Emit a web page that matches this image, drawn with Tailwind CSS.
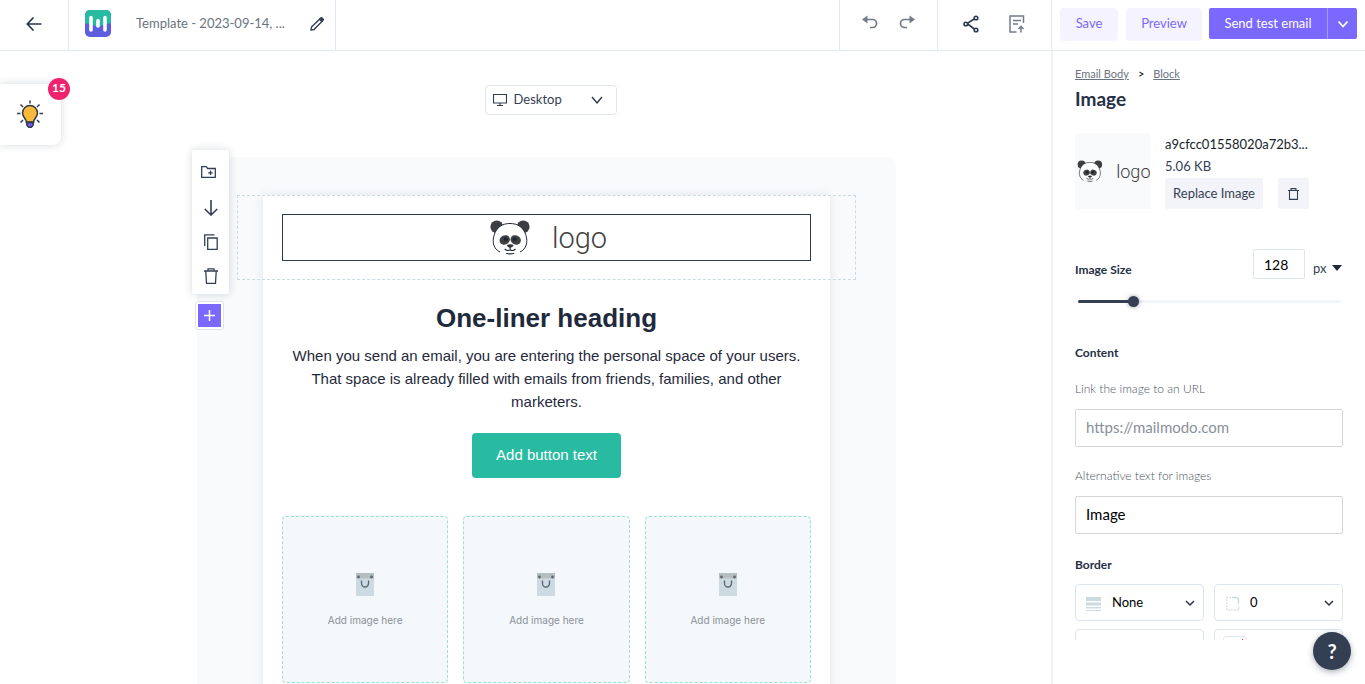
<!DOCTYPE html>
<html lang="en">
<head>
  <meta charset="UTF-8" />
  <meta name="viewport" content="width=device-width, initial-scale=1.0"/>
  <title>Template Editor</title>
  <script src="https://cdn.jsdelivr.net/npm/@tailwindcss/browser@4"></script>
</head>
<body class="h-screen overflow-hidden flex flex-col bg-white text-[#343f53] text-[13px] font-[Lato,sans-serif]">

  <!-- shared panda logo -->
  <svg class="hidden">
    <symbol id="panda-logo" viewBox="0 0 128 46">
      <circle cx="13.800" cy="11.800" r="6.400" fill="#3c3e42"/>
      <circle cx="40.200" cy="11.800" r="6.400" fill="#3c3e42"/>
      <path d="M17 37C10.500 34 9 27 11 20.500C13.500 12 19.500 8.500 27 8.500S40.500 12 43 20.500C45 27 43.500 34 37 37" fill="#fff" stroke="#222b36" stroke-width="1"/>
      <ellipse cx="21.700" cy="24.900" rx="5.300" ry="4.600" fill="#414141" transform="rotate(-25 21.700 24.900)"/>
      <ellipse cx="32.700" cy="24.900" rx="5.300" ry="4.600" fill="#414141" transform="rotate(25 32.700 24.900)"/>
      <circle cx="22.700" cy="24.200" r="2" fill="#1b2637"/>
      <circle cx="31.700" cy="24.200" r="2" fill="#1b2637"/>
      <path d="M23.700 30q3.500-1.500 7 0q-1 2.700-3.500 2.700t-3.500-2.700" fill="#333"/>
      <path d="M27.200 32v2.300M21.700 34q2.700 2.500 5.400.7q2.700 1.800 5.400-.7M23.200 38.300q4 1.200 8 0" fill="none" stroke="#222b36" stroke-width="1.100"/>
      <text x="69" y="33" font-size="29" font-weight="300" font-family="Roboto, sans-serif" fill="#414141">logo</text>
    </symbol>
    <symbol id="bag" viewBox="0 0 18 23">
      <path d="M0 0h18v23H0z" fill="#cbdbe1"/>
      <path d="M0 0h18v5.500H0z" fill="#b5bfc0"/>
      <circle cx="2.500" cy="4" r="1.400" fill="#5f6670"/>
      <circle cx="15.500" cy="4" r="1.400" fill="#5f6670"/>
      <path d="M5.500 7.500v3a3.500 3.500 0 0 0 7 0v-3" fill="none" stroke="#5b626d" stroke-width="1.300"/>
    </symbol>
    <symbol id="chevron" viewBox="0 0 12 12">
      <path d="M2 4l4 4 4-4" fill="none" stroke="currentColor" stroke-width="1.500"/>
    </symbol>
  </svg>

  <header class="flex h-[51px] shrink-0 border-b border-[#e2e8f0]">
    <button aria-label="Back" class="w-[69px] border-r border-[#e2e8f0] flex items-center justify-center pb-[3px]">
      <svg class="w-4 h-4" viewBox="0 0 16 16" fill="none" stroke="#2b3547" stroke-width="1.700"><path d="M15.500 8H1.500M7.500 1.500L1.300 8l6.200 6.500"/></svg>
    </button>
    <div class="w-[267px] border-r border-[#e2e8f0] flex items-center pl-4 pr-[11px] pb-[3px]">
      <svg class="w-[26px] h-[27px]" viewBox="0 0 26 27">
        <rect width="26" height="27" rx="5" fill="#5f5ce0"/>
        <path d="M0 13.500V5a5 5 0 0 1 5-5h16a5 5 0 0 1 5 5v8.500h-4l-2 2-3-.5-4 3-4-3-3 .5-2-2z" fill="#28bba1"/>
        <path d="M6 7.500v12.500M13 10.500v5.500M20 7.500v12.500" stroke="#fff" stroke-width="3.600" stroke-linecap="round"/>
      </svg>
      <span class="ml-[25px] text-[#6a7381]">Template - 2023-09-14, ...</span>
      <button aria-label="Rename" class="ml-auto">
        <svg class="w-[14px] h-[14px]" viewBox="0 0 14 14" fill="none" stroke="#343f53" stroke-width="1.400"><path d="M1 13l.5-3L9.500 2.200l2.400 2.400L4 12.500z"/><path d="M10 1.500L11.500.5l2 2-1 1.500z" fill="#343f53"/></svg>
      </button>
    </div>
    <div class="ml-auto w-[99px] border-x border-[#e2e8f0] flex items-center justify-center gap-[21px] pb-[7px]">
      <button aria-label="Undo"><svg class="w-4 h-[14px]" viewBox="0 0 16 14"><path d="M4 4.500h6.500a4 4 0 0 1 0 8H8" fill="none" stroke="#737c88" stroke-width="1.700"/><path d="M0 4.500L5.500.5v8z" fill="#737c88"/></svg></button>
      <button aria-label="Redo"><svg class="w-4 h-[14px]" viewBox="0 0 16 14"><path d="M12 4.500H5.500a4 4 0 0 0 0 8H8" fill="none" stroke="#737c88" stroke-width="1.700"/><path d="M16 4.500L10.500.5v8z" fill="#737c88"/></svg></button>
    </div>
    <div class="w-[114px] border-r border-[#e2e8f0] flex items-center justify-center gap-[30px] pr-[2px] pb-[3px]">
      <button aria-label="Share"><svg class="w-4 h-[18px]" viewBox="0 0 16 18" fill="none" stroke="#2f3a4c" stroke-width="1.600"><path d="M12 3.500L4 8.500l8 6"/><circle cx="2.800" cy="9" r="1.800" fill="#fff"/><circle cx="13" cy="3" r="1.800" fill="#fff"/><circle cx="13" cy="15" r="1.800" fill="#fff"/></svg></button>
      <button aria-label="Export"><svg class="w-4 h-[18px]" viewBox="0 0 16 18" fill="none" stroke="#737c88" stroke-width="1.500"><path d="M7.500 17H1V1h13.500v7M4 5.500h8M4 9h5M12 17.500V12M9.500 14l2.500-2.700L14.500 14"/></svg></button>
    </div>
    <div class="w-[313px] flex items-start pt-2 pl-2 pr-2">
      <button class="w-[58px] h-[33px] mr-2 rounded-sm bg-[#f5f3ff] text-[#7b69f5] pb-[2px]">Save</button>
      <button class="w-[76px] h-[33px] rounded-sm bg-[#f5f3ff] text-[#7b69f5] pb-[2px]">Preview</button>
      <div class="ml-auto flex h-[31px] rounded-xs bg-[#7b68ff] text-white">
        <button class="w-[118px]">Send test email</button>
        <button aria-label="More send options" class="w-[30px] border-l border-[#a79bff] flex items-center justify-center">
          <svg class="w-3 h-3" viewBox="0 0 12 12"><path d="M1.500 3.500L6 8.500l4.500-5" fill="none" stroke="#fff" stroke-width="1.800"/></svg>
        </button>
      </div>
    </div>
  </header>

  <div class="flex flex-1 min-h-0">
    <main class="relative flex-1 min-w-0 overflow-hidden pl-[42px] pt-[34px]">

      <div class="absolute left-0 top-[33px] w-[61px] h-[61px] bg-white rounded-r-lg shadow-[0_0_8px_rgba(45,60,80,0.2)] flex items-center justify-center">
        <button aria-label="Tips" class="pr-[2px] pb-[2px]">
          <svg class="w-7 h-7" viewBox="0 0 28 28">
            <path d="M14 .5V3.500M1 13.500h3.500M23.500 13.500H27M4.500 4.500l2.500 2.500M23.500 4.500L21 7M4.500 22.500L7 20M23.500 22.500L21 20" stroke="#343f53" stroke-width="1.500"/>
            <path d="M10.500 22c0-3-4-4.500-4-9a7.500 7.500 0 0 1 15 0c0 4.500-4 6-4 9z" fill="#fbb93c" stroke="#2f3a4c" stroke-width="1.500"/>
            <path d="M10.500 22.500h7l-.5 3-2 2h-2l-2-2z" fill="#6c5ce7" stroke="#2f3a4c" stroke-width="1.500"/>
          </svg>
        </button>
        <span class="absolute -top-[6px] -right-[9px] w-[22px] h-[22px] rounded-full bg-[#f0246e] text-white text-xs font-bold flex items-center justify-center pb-[2px]">15</span>
      </div>

      <div class="relative w-[132px] mx-auto left-1">
        <svg class="absolute left-2 top-[9px] w-[14px] h-3" viewBox="0 0 14 12" fill="none" stroke="#343f53" stroke-width="1.200"><path d="M.5 .5h13v8.500H.5zM7 9v2.500M4 11.500h6"/></svg>
        <select aria-label="Device" class="appearance-none w-full h-[30px] pl-7 border border-[#dfe5ee] rounded-sm bg-transparent">
          <option>Desktop</option>
          <option>Mobile</option>
        </select>
        <svg class="absolute right-[14px] top-[9px] w-3 h-3 pointer-events-none" viewBox="0 0 12 12" fill="none" stroke="#2b3547" stroke-width="1.400"><path d="M1 3l5 6 5-6"/></svg>
      </div>

      <div class="relative w-[699px] h-full mx-auto mt-[42px] pt-[38px] rounded-lg bg-[#f8fafc]">

        <!-- block toolbar -->
        <div class="absolute -left-[5px] -top-[7px] z-10">
          <div class="w-[37px] h-[144px] rounded-xs bg-white shadow-[0_0_8px_rgba(45,60,80,0.2)] flex flex-col items-center pt-4 pb-[11px]">
            <button aria-label="Save block" class="mr-1"><svg class="w-[15px] h-3" viewBox="0 0 15 12" fill="none" stroke="#343f53" stroke-width="1.300"><path d="M.7 11.300V.7h4.500l1.500 1.800h7.600v8.800zM9.500 4.500v4.600M7.200 6.800h4.600"/></svg></button>
            <button aria-label="Move down" class="mt-[22px]"><svg class="w-[14px] h-4" viewBox="0 0 14 16" fill="none" stroke="#343f53" stroke-width="1.600"><path d="M7 0v14.500M.8 9L7 15l6.200-6"/></svg></button>
            <button aria-label="Duplicate" class="mt-[18px]"><svg class="w-[14px] h-4" viewBox="0 0 14 16" fill="none" stroke="#343f53" stroke-width="1.300"><path d="M3.700 4h9.500v11.300H3.700zM.7 12V.8h9.800"/></svg></button>
            <button aria-label="Delete" class="mt-[18px]"><svg class="w-[14px] h-4" viewBox="0 0 14 16" fill="none" stroke="#343f53" stroke-width="1.300"><path d="M0 3h14M4 3V.8h6V3M1.800 3.500l.7 11.800h9l.7-11.800"/></svg></button>
          </div>
          <button aria-label="Add block" class="mt-2 ml-1 w-[27px] h-[27px] border-2 border-white outline outline-[#dfe3ea] rounded-xs bg-[#7b68ff] flex items-center justify-center">
            <svg class="w-[11px] h-[11px]" viewBox="0 0 11 11" stroke="#fff" stroke-width="1.500"><path d="M5.500 0v11M0 5.500h11"/></svg>
          </button>
        </div>

        <article class="w-[567px] h-full mx-auto bg-white shadow-[0_0_10px_rgba(45,60,80,0.1)] text-center text-[#1f2a3c] font-['Liberation_Sans',Arial,sans-serif]">
          <section class="-mx-[26px] h-[85px] px-11 py-[18px] border border-dashed border-[#cbdbe1]">
            <div class="h-[47px] border border-[#2d3a50] flex items-center justify-center">
              <svg class="w-[128px] h-[46px]" role="img" aria-label="logo"><use href="#panda-logo"/></svg>
            </div>
          </section>
          <div class="px-[19px] pt-[22px]">
            <h1 class="text-[26px] leading-8 font-bold">One-liner heading</h1>
            <p class="mt-[10px] text-[15px] leading-[23px]">When you send an email, you are entering the personal space of your users. That space is already filled with emails from friends, families, and other marketers.</p>
            <button class="mt-5 w-[149px] h-[45px] rounded-sm bg-[#28bba1] text-white text-[15px]">Add button text</button>
            <div class="mt-[38px] grid grid-cols-3 gap-[15px] font-[Inter,sans-serif] text-[10px] leading-4 text-[#8a9099]">
              <div class="h-[167px] rounded-sm border border-dashed border-[#9be0d1] bg-[#f4f8fa] flex flex-col items-center pt-14 gap-4">
                <svg class="w-[18px] h-[23px]"><use href="#bag"/></svg>
                <span>Add image here</span>
              </div>
              <div class="h-[167px] rounded-sm border border-dashed border-[#9be0d1] bg-[#f4f8fa] flex flex-col items-center pt-14 gap-4">
                <svg class="w-[18px] h-[23px]"><use href="#bag"/></svg>
                <span>Add image here</span>
              </div>
              <div class="h-[167px] rounded-sm border border-dashed border-[#9be0d1] bg-[#f4f8fa] flex flex-col items-center pt-14 gap-4">
                <svg class="w-[18px] h-[23px]"><use href="#bag"/></svg>
                <span>Add image here</span>
              </div>
            </div>
          </div>
        </article>
      </div>
    </main>

    <aside class="relative w-[314px] shrink-0 border-l-2 border-[#f1f2f8] flex flex-col pb-11 bg-white">
      <div class="flex-1 overflow-hidden pl-[22px] pr-[22px] pt-[15px]">
        <nav class="flex gap-[9px] text-[11px] leading-4 text-[#6a7381]">
          <a href="#" class="underline">Email Body</a>
          <span class="text-black">&gt;</span>
          <a href="#" class="underline">Block</a>
        </nav>
        <h2 class="mt-[5px] text-[19px] leading-6 font-bold text-[#253045]">Image</h2>

        <div class="mt-[22px] flex gap-[15px]">
          <div class="w-[75px] h-[76px] bg-[#f8fafc] flex items-center justify-center overflow-hidden">
            <svg class="w-[80px] h-[29px] shrink-0" role="img" aria-label="logo"><use href="#panda-logo"/></svg>
          </div>
          <div>
            <p class="leading-[22px] text-[#161d29]">a9cfcc01558020a72b3...</p>
            <p class="leading-[22px]">5.06 KB</p>
            <div class="mt-px flex gap-[15px]">
              <button class="w-[98px] h-[31px] rounded-xs bg-[#f3f4f9]">Replace Image</button>
              <button aria-label="Delete image" class="w-[31px] h-[31px] rounded-xs bg-[#f3f4f9] flex items-center justify-center">
                <svg class="w-[11px] h-3" viewBox="0 0 11 12" fill="none" stroke="#343f53" stroke-width="1.100"><path d="M0 2.500h11M3 2.500V.6h5v1.900M1.500 2.500v8.900h8V2.500"/></svg>
              </button>
            </div>
          </div>
        </div>

        <div class="mt-10 h-[30px] flex items-start">
          <label for="size" class="mt-3 text-xs leading-[18px] font-bold text-[#253045]">Image Size</label>
          <input id="size" type="text" value="128" class="ml-auto w-[52px] h-[30px] pl-[10px] border border-[#dfe5ee] rounded-xs text-sm text-black"/>
          <div class="relative ml-2 mt-[10px] w-[30px]">
            <select aria-label="Unit" class="appearance-none w-full leading-[18px]">
              <option>px</option>
              <option>%</option>
            </select>
            <svg class="absolute right-px top-[6px] w-[10px] h-[6px] pointer-events-none" viewBox="0 0 10 6"><path d="M0 0h10L5 6z" fill="#1f2a3c"/></svg>
          </div>
        </div>
        <input type="range" aria-label="Image size slider" min="0" max="100" value="20" class="block mx-[3px] mt-[21px] w-[263px] h-[3px] rounded-full appearance-none bg-[linear-gradient(to_right,#343f53_20%,#f1f4f8_20%)] [&::-webkit-slider-thumb]:appearance-none [&::-webkit-slider-thumb]:w-[11px] [&::-webkit-slider-thumb]:h-[11px] [&::-webkit-slider-thumb]:rounded-full [&::-webkit-slider-thumb]:bg-[#343f53] [&::-webkit-slider-thumb]:shadow-[0_0_4px_rgba(45,60,80,0.5)]"/>

        <h3 class="mt-[41px] text-xs leading-[18px] font-bold text-[#253045]">Content</h3>
        <label for="link" class="block mt-[18px] text-xs leading-[18px] font-light text-[#4b5564]">Link the image to an URL</label>
        <input id="link" type="text" placeholder="https://mailmodo.com" class="mt-[11px] w-full h-[38px] px-[10px] pb-[3px] border border-[#d3d6da] rounded-xs text-[15px] text-black placeholder:text-[#87909b]"/>
        <label for="alt" class="block mt-5 text-xs leading-[18px] font-light text-[#4b5564]">Alternative text for images</label>
        <input id="alt" type="text" value="Image" class="mt-[11px] w-full h-[38px] px-[10px] pb-[3px] border border-[#d3d6da] rounded-xs text-[15px] text-black"/>

        <h3 class="mt-[22px] text-xs leading-[18px] font-bold text-[#253045]">Border</h3>
        <div class="mt-[10px] grid grid-cols-2 gap-x-[10px] gap-y-2 text-black">
          <div class="relative">
            <svg class="absolute left-[11px] top-3 w-[15px] h-[15px]" viewBox="0 0 15 15" fill="#cbdbe1"><path d="M0 1h15v4H0zM0 6.500h15v3H0zM0 11h15v1.500H0zM0 14h15v1H0z"/></svg>
            <select aria-label="Border style" class="appearance-none w-full h-[37px] pl-9 border border-[#dfe5ee] rounded-sm">
              <option>None</option>
              <option>Solid</option>
            </select>
            <svg class="absolute right-2 top-[13px] w-3 h-3 pointer-events-none text-[#2b3547]"><use href="#chevron"/></svg>
          </div>
          <div class="relative">
            <svg class="absolute left-3 top-3 w-[14px] h-[15px]" viewBox="0 0 14 15" fill="none" stroke="#cbdbe1" stroke-width="1.300"><path d="M6 1.500h4.500a2 2 0 0 1 2 2V8"/><path d="M5 1.500H.8v12.500h12V9" stroke-dasharray="1.500 1.500"/></svg>
            <select aria-label="Border radius" class="appearance-none w-full h-[37px] pl-[35px] border border-[#dfe5ee] rounded-sm">
              <option>0</option>
              <option>4</option>
            </select>
            <svg class="absolute right-2 top-[13px] w-3 h-3 pointer-events-none text-[#2b3547]"><use href="#chevron"/></svg>
          </div>
          <input type="text" aria-label="Border width" class="w-full h-[37px] px-[10px] border border-[#dfe5ee] rounded-sm"/>
          <button aria-label="Border color" class="h-[37px] px-2 border border-[#dfe5ee] rounded-sm flex items-center">
            <svg class="w-6 h-6" viewBox="0 0 24 24" fill="none"><rect x=".5" y=".5" width="23" height="23" rx="3" stroke="#dfe5ee"/><path d="M20 3L4 21" stroke="#f0246e"/></svg>
          </button>
        </div>
      </div>
      <button aria-label="Help" class="absolute right-[14px] bottom-[14px] w-[38px] h-[38px] rounded-full bg-[#343f53] shadow-[0_2px_6px_rgba(45,60,80,0.4)] text-white text-xl font-bold">?</button>
    </aside>
  </div>
</body>
</html>
